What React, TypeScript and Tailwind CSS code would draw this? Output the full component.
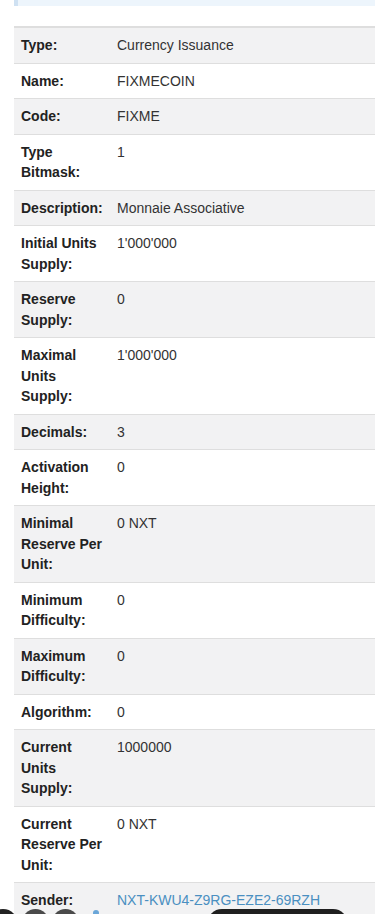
const rows: [string, string][] = [
  ["Type:", "Currency Issuance"],
  ["Name:", "FIXMECOIN"],
  ["Code:", "FIXME"],
  ["Type Bitmask:", "1"],
  ["Description:", "Monnaie Associative"],
  ["Initial Units Supply:", "1'000'000"],
  ["Reserve Supply:", "0"],
  ["Maximal Units Supply:", "1'000'000"],
  ["Decimals:", "3"],
  ["Activation Height:", "0"],
  ["Minimal Reserve Per Unit:", "0 NXT"],
  ["Minimum Difficulty:", "0"],
  ["Maximum Difficulty:", "0"],
  ["Algorithm:", "0"],
  ["Current Units Supply:", "1000000"],
  ["Current Reserve Per Unit:", "0 NXT"],
];

export default function App() {
  return (
    <div className="relative w-[375px] h-[914px] overflow-hidden bg-white font-['Liberation_Sans',Arial,sans-serif] text-[14px] leading-[20.5px]">
      {/* info box, mostly scrolled off */}
      <div className="ml-[14px] w-[400px] h-[6px] bg-[#edf5fc] border-l-4 border-[#cfe1f2]" />

      <div className="ml-[14px] mt-[20px] w-[420px] border-t-2 border-[#dedede]">
        {rows.map(([label, value], i) => (
          <div
            key={label}
            className={`flex border-b border-[#dedede] ${i % 2 === 0 ? "bg-[#f2f2f3]" : "bg-white"}`}
          >
            <div className="w-[97px] shrink-0 pl-[7px] pr-[4px] py-[7px] font-bold text-[#222]">{label}</div>
            <div className="pl-[6px] py-[7px] text-[#333]">{value}</div>
          </div>
        ))}
        <div className="flex bg-[#f2f2f3]">
          <div className="w-[97px] shrink-0 pl-[7px] pr-[4px] py-[7px] font-bold text-[#222]">Sender:</div>
          <div className="pl-[6px] py-[7px] text-[#4a8fc1]">NXT-KWU4-Z9RG-EZE2-69RZH</div>
        </div>
      </div>

      {/* bottom toolbar peeking in over the table */}
      <div className="absolute left-[-12px] top-[909px] flex items-start">
        <div className="w-[30px] h-[30px] rounded-full bg-[#222]" />
        <div className="ml-[4px] w-[27px] h-[27px] rounded-full bg-[#4a4a4a]" />
        <div className="ml-[3px] w-[27px] h-[27px] rounded-full bg-[#4a4a4a]" />
        <div className="ml-[14px] mt-[1px] w-[6px] h-[6px] rounded-full bg-[#6aa6d8]" />
        <div className="ml-[108px] w-[141px] h-[30px] rounded-full bg-[#1f1f1f]" />
      </div>
    </div>
  );
}
